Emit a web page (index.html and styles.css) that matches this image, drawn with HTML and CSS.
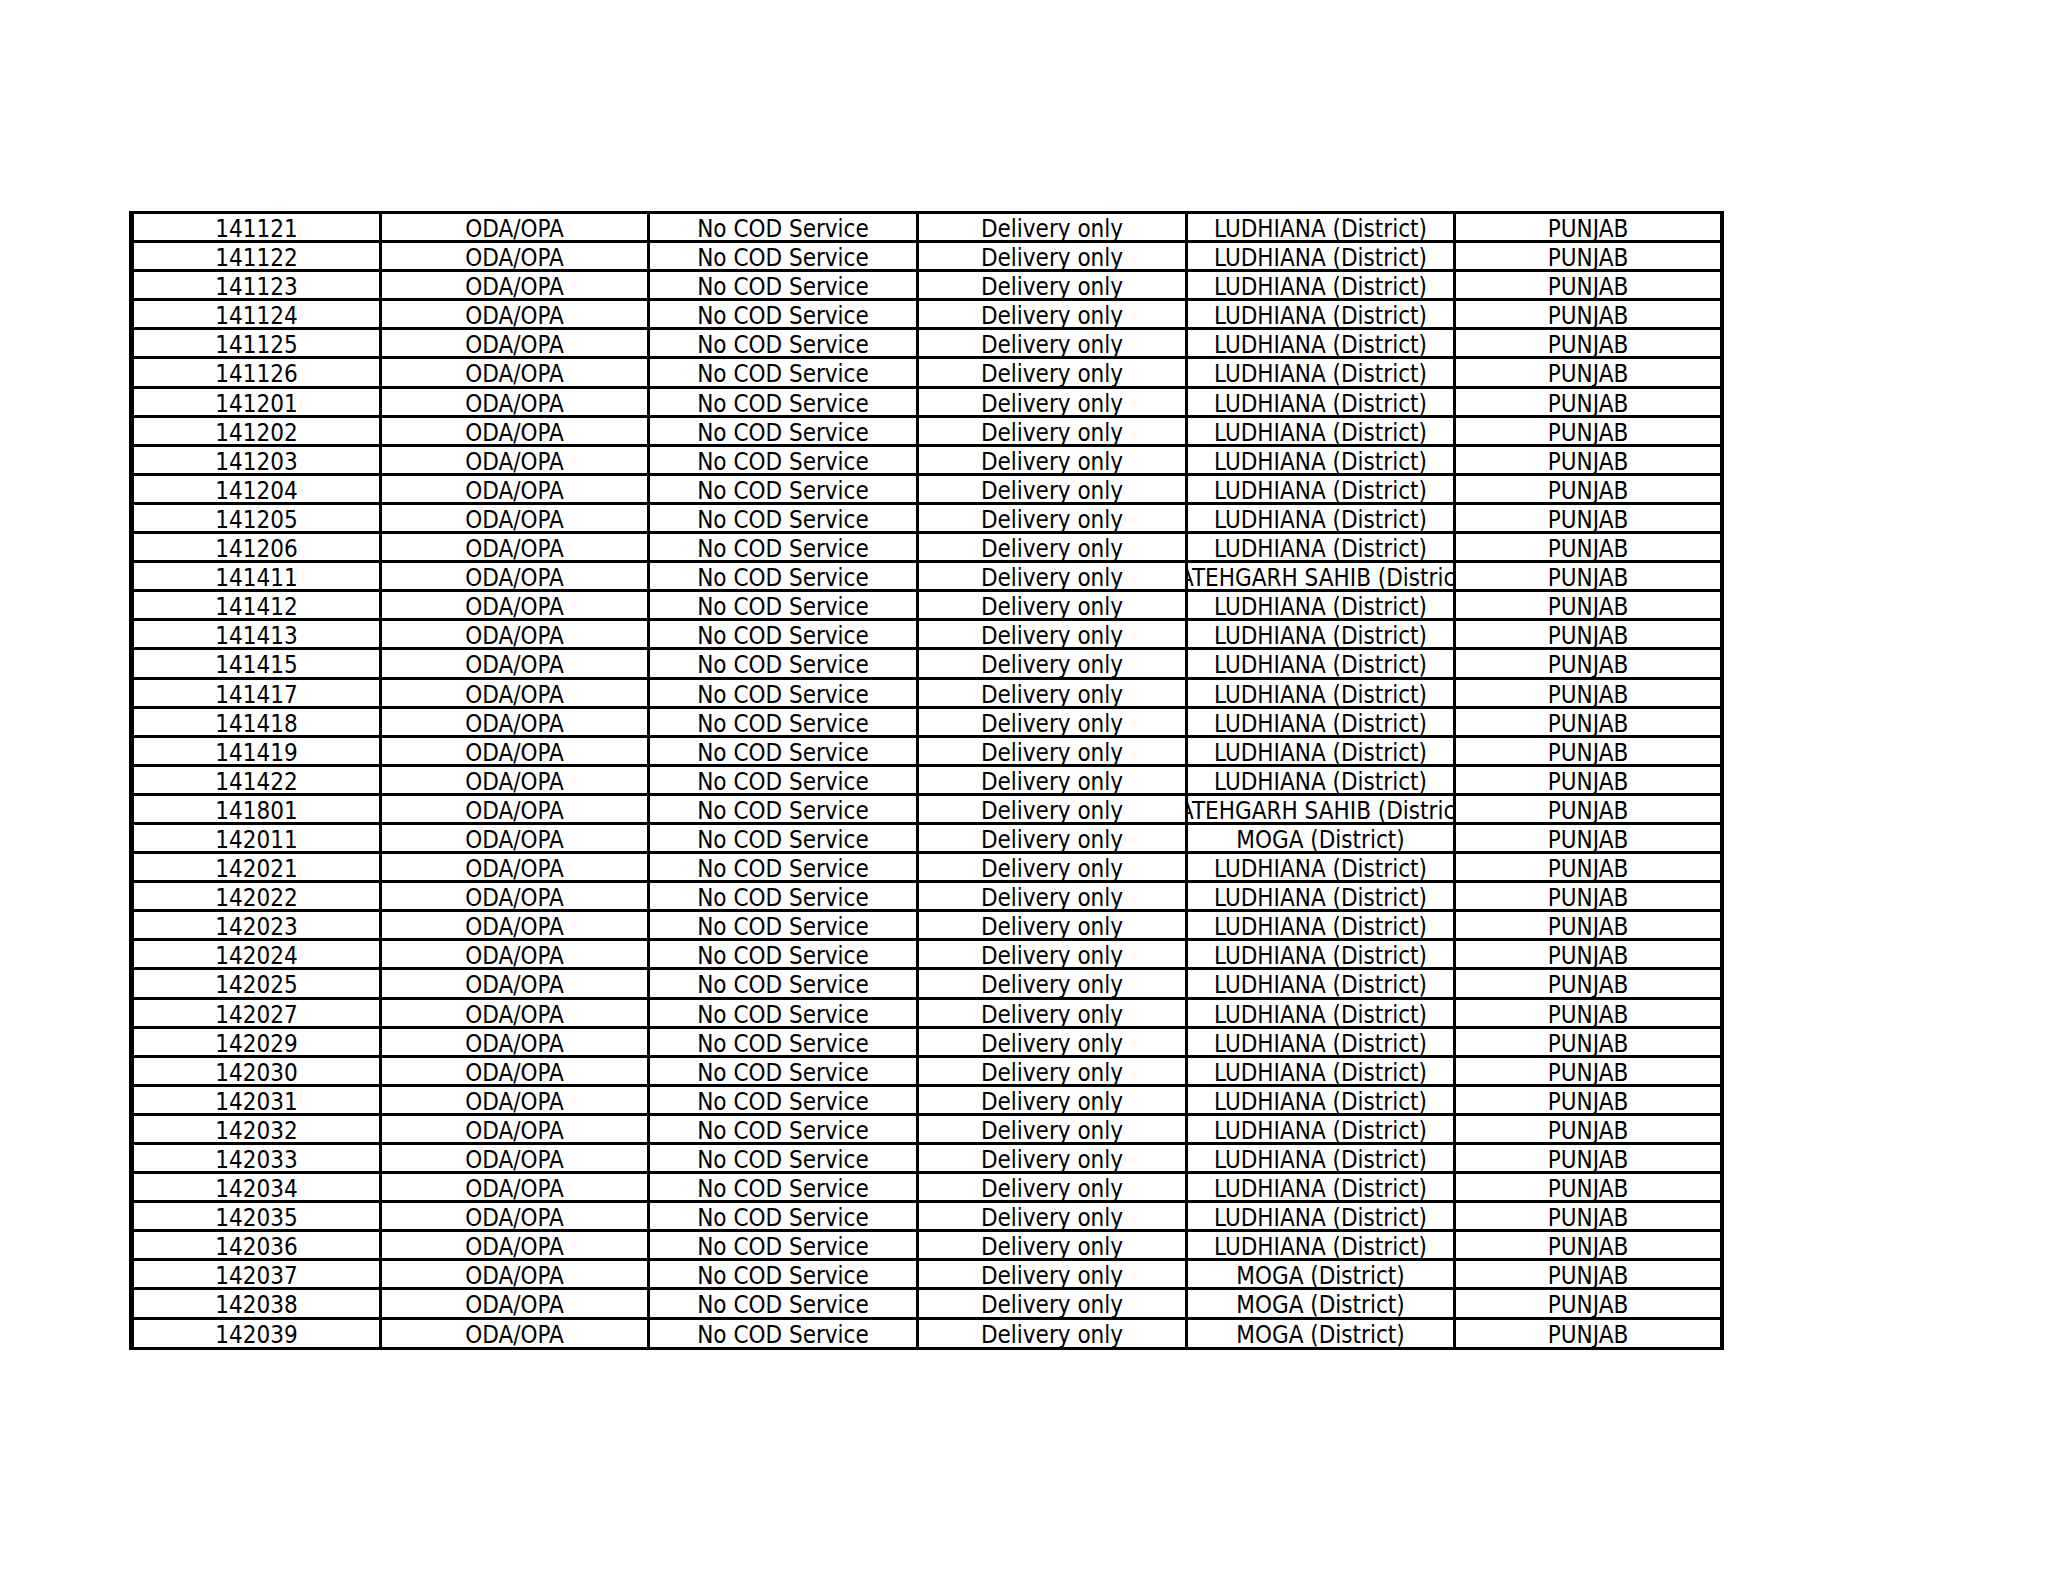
FILE: index.html
```html
<!DOCTYPE html>
<html>
<head>
<meta charset="utf-8">
<title>Pincode list</title>
<link rel="stylesheet" href="styles.css">
</head>
<body>
<div class="sheet">
<div class="row"><div class="c">141121</div><div class="c">ODA/OPA</div><div class="c">No COD Service</div><div class="c">Delivery only</div><div class="c">LUDHIANA (District)</div><div class="c">PUNJAB</div></div>
<div class="row"><div class="c">141122</div><div class="c">ODA/OPA</div><div class="c">No COD Service</div><div class="c">Delivery only</div><div class="c">LUDHIANA (District)</div><div class="c">PUNJAB</div></div>
<div class="row"><div class="c">141123</div><div class="c">ODA/OPA</div><div class="c">No COD Service</div><div class="c">Delivery only</div><div class="c">LUDHIANA (District)</div><div class="c">PUNJAB</div></div>
<div class="row"><div class="c">141124</div><div class="c">ODA/OPA</div><div class="c">No COD Service</div><div class="c">Delivery only</div><div class="c">LUDHIANA (District)</div><div class="c">PUNJAB</div></div>
<div class="row"><div class="c">141125</div><div class="c">ODA/OPA</div><div class="c">No COD Service</div><div class="c">Delivery only</div><div class="c">LUDHIANA (District)</div><div class="c">PUNJAB</div></div>
<div class="row"><div class="c">141126</div><div class="c">ODA/OPA</div><div class="c">No COD Service</div><div class="c">Delivery only</div><div class="c">LUDHIANA (District)</div><div class="c">PUNJAB</div></div>
<div class="row"><div class="c">141201</div><div class="c">ODA/OPA</div><div class="c">No COD Service</div><div class="c">Delivery only</div><div class="c">LUDHIANA (District)</div><div class="c">PUNJAB</div></div>
<div class="row"><div class="c">141202</div><div class="c">ODA/OPA</div><div class="c">No COD Service</div><div class="c">Delivery only</div><div class="c">LUDHIANA (District)</div><div class="c">PUNJAB</div></div>
<div class="row"><div class="c">141203</div><div class="c">ODA/OPA</div><div class="c">No COD Service</div><div class="c">Delivery only</div><div class="c">LUDHIANA (District)</div><div class="c">PUNJAB</div></div>
<div class="row"><div class="c">141204</div><div class="c">ODA/OPA</div><div class="c">No COD Service</div><div class="c">Delivery only</div><div class="c">LUDHIANA (District)</div><div class="c">PUNJAB</div></div>
<div class="row"><div class="c">141205</div><div class="c">ODA/OPA</div><div class="c">No COD Service</div><div class="c">Delivery only</div><div class="c">LUDHIANA (District)</div><div class="c">PUNJAB</div></div>
<div class="row"><div class="c">141206</div><div class="c">ODA/OPA</div><div class="c">No COD Service</div><div class="c">Delivery only</div><div class="c">LUDHIANA (District)</div><div class="c">PUNJAB</div></div>
<div class="row"><div class="c">141411</div><div class="c">ODA/OPA</div><div class="c">No COD Service</div><div class="c">Delivery only</div><div class="c clip">FATEHGARH SAHIB (District)</div><div class="c">PUNJAB</div></div>
<div class="row"><div class="c">141412</div><div class="c">ODA/OPA</div><div class="c">No COD Service</div><div class="c">Delivery only</div><div class="c">LUDHIANA (District)</div><div class="c">PUNJAB</div></div>
<div class="row"><div class="c">141413</div><div class="c">ODA/OPA</div><div class="c">No COD Service</div><div class="c">Delivery only</div><div class="c">LUDHIANA (District)</div><div class="c">PUNJAB</div></div>
<div class="row"><div class="c">141415</div><div class="c">ODA/OPA</div><div class="c">No COD Service</div><div class="c">Delivery only</div><div class="c">LUDHIANA (District)</div><div class="c">PUNJAB</div></div>
<div class="row"><div class="c">141417</div><div class="c">ODA/OPA</div><div class="c">No COD Service</div><div class="c">Delivery only</div><div class="c">LUDHIANA (District)</div><div class="c">PUNJAB</div></div>
<div class="row"><div class="c">141418</div><div class="c">ODA/OPA</div><div class="c">No COD Service</div><div class="c">Delivery only</div><div class="c">LUDHIANA (District)</div><div class="c">PUNJAB</div></div>
<div class="row"><div class="c">141419</div><div class="c">ODA/OPA</div><div class="c">No COD Service</div><div class="c">Delivery only</div><div class="c">LUDHIANA (District)</div><div class="c">PUNJAB</div></div>
<div class="row"><div class="c">141422</div><div class="c">ODA/OPA</div><div class="c">No COD Service</div><div class="c">Delivery only</div><div class="c">LUDHIANA (District)</div><div class="c">PUNJAB</div></div>
<div class="row"><div class="c">141801</div><div class="c">ODA/OPA</div><div class="c">No COD Service</div><div class="c">Delivery only</div><div class="c clip">FATEHGARH SAHIB (District)</div><div class="c">PUNJAB</div></div>
<div class="row"><div class="c">142011</div><div class="c">ODA/OPA</div><div class="c">No COD Service</div><div class="c">Delivery only</div><div class="c">MOGA (District)</div><div class="c">PUNJAB</div></div>
<div class="row"><div class="c">142021</div><div class="c">ODA/OPA</div><div class="c">No COD Service</div><div class="c">Delivery only</div><div class="c">LUDHIANA (District)</div><div class="c">PUNJAB</div></div>
<div class="row"><div class="c">142022</div><div class="c">ODA/OPA</div><div class="c">No COD Service</div><div class="c">Delivery only</div><div class="c">LUDHIANA (District)</div><div class="c">PUNJAB</div></div>
<div class="row"><div class="c">142023</div><div class="c">ODA/OPA</div><div class="c">No COD Service</div><div class="c">Delivery only</div><div class="c">LUDHIANA (District)</div><div class="c">PUNJAB</div></div>
<div class="row"><div class="c">142024</div><div class="c">ODA/OPA</div><div class="c">No COD Service</div><div class="c">Delivery only</div><div class="c">LUDHIANA (District)</div><div class="c">PUNJAB</div></div>
<div class="row"><div class="c">142025</div><div class="c">ODA/OPA</div><div class="c">No COD Service</div><div class="c">Delivery only</div><div class="c">LUDHIANA (District)</div><div class="c">PUNJAB</div></div>
<div class="row"><div class="c">142027</div><div class="c">ODA/OPA</div><div class="c">No COD Service</div><div class="c">Delivery only</div><div class="c">LUDHIANA (District)</div><div class="c">PUNJAB</div></div>
<div class="row"><div class="c">142029</div><div class="c">ODA/OPA</div><div class="c">No COD Service</div><div class="c">Delivery only</div><div class="c">LUDHIANA (District)</div><div class="c">PUNJAB</div></div>
<div class="row"><div class="c">142030</div><div class="c">ODA/OPA</div><div class="c">No COD Service</div><div class="c">Delivery only</div><div class="c">LUDHIANA (District)</div><div class="c">PUNJAB</div></div>
<div class="row"><div class="c">142031</div><div class="c">ODA/OPA</div><div class="c">No COD Service</div><div class="c">Delivery only</div><div class="c">LUDHIANA (District)</div><div class="c">PUNJAB</div></div>
<div class="row"><div class="c">142032</div><div class="c">ODA/OPA</div><div class="c">No COD Service</div><div class="c">Delivery only</div><div class="c">LUDHIANA (District)</div><div class="c">PUNJAB</div></div>
<div class="row"><div class="c">142033</div><div class="c">ODA/OPA</div><div class="c">No COD Service</div><div class="c">Delivery only</div><div class="c">LUDHIANA (District)</div><div class="c">PUNJAB</div></div>
<div class="row"><div class="c">142034</div><div class="c">ODA/OPA</div><div class="c">No COD Service</div><div class="c">Delivery only</div><div class="c">LUDHIANA (District)</div><div class="c">PUNJAB</div></div>
<div class="row"><div class="c">142035</div><div class="c">ODA/OPA</div><div class="c">No COD Service</div><div class="c">Delivery only</div><div class="c">LUDHIANA (District)</div><div class="c">PUNJAB</div></div>
<div class="row"><div class="c">142036</div><div class="c">ODA/OPA</div><div class="c">No COD Service</div><div class="c">Delivery only</div><div class="c">LUDHIANA (District)</div><div class="c">PUNJAB</div></div>
<div class="row"><div class="c">142037</div><div class="c">ODA/OPA</div><div class="c">No COD Service</div><div class="c">Delivery only</div><div class="c">MOGA (District)</div><div class="c">PUNJAB</div></div>
<div class="row"><div class="c">142038</div><div class="c">ODA/OPA</div><div class="c">No COD Service</div><div class="c">Delivery only</div><div class="c">MOGA (District)</div><div class="c">PUNJAB</div></div>
<div class="row"><div class="c">142039</div><div class="c">ODA/OPA</div><div class="c">No COD Service</div><div class="c">Delivery only</div><div class="c">MOGA (District)</div><div class="c">PUNJAB</div></div>
</div>
</body>
</html>
```

FILE: styles.css
```css
html, body {
  margin: 0;
  padding: 0;
  background: #ffffff;
}

body {
  padding-top: 211px;
  padding-left: 129px;
  font-family: "DejaVu Sans Condensed", "DejaVu Sans", sans-serif;
  font-stretch: semi-condensed;
  font-size: 24px;
  color: #000000;
}

.sheet {
  width: 1586px;
  border-left: 5px solid #000;
  border-top: 3px solid #000;
  border-right: 4px solid #000;
  border-bottom: 3px solid #000;
}

.row {
  display: grid;
  grid-template-columns: 248px 268px 269px 269px 268px 264px;
  height: 29.1px;
  box-sizing: border-box;
  border-bottom: 3px solid #000;
}

.row:last-child {
  border-bottom: none;
  height: 27px;
}

.c {
  display: flex;
  justify-content: center;
  align-items: center;
  white-space: nowrap;
  line-height: 26px;
  padding-top: 2px;
  box-sizing: border-box;
  border-right: 3px solid #000;
  min-width: 0;
}

.c:last-child {
  border-right: none;
}

.clip {
  overflow: hidden;
}
```
